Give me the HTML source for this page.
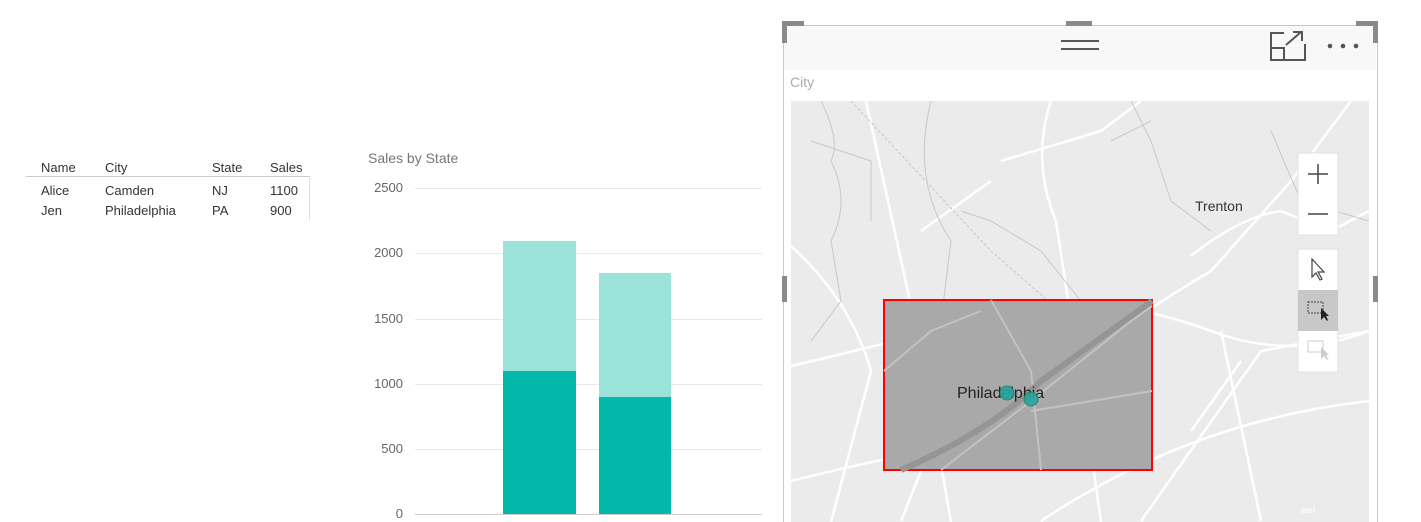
<!DOCTYPE html>
<html><head><meta charset="utf-8"><style>
html,body{margin:0;width:1421px;height:522px;overflow:hidden}
body{background:#fff;font-family:"Liberation Sans",sans-serif}
#w{position:relative;width:1421px;height:522px;overflow:hidden}
svg{display:block}
.t{position:absolute;font-size:13px;line-height:15px;color:#333}
.ax{position:absolute;font-size:13px;line-height:14px;color:#666;text-align:right;width:36px;left:367px}
.g{position:absolute;left:415px;width:347px;height:1px;background:#e8e8e8}
</style></head><body><div id="w">
<div class="t" style="left:41px;top:160px">Name</div>
<div class="t" style="left:105px;top:160px">City</div>
<div class="t" style="left:212px;top:160px">State</div>
<div class="t" style="left:270px;top:160px">Sales</div>
<div style="position:absolute;left:26px;top:176px;width:284px;height:1px;background:#ccc"></div>
<div style="position:absolute;left:309px;top:178px;width:1px;height:42px;background:#ddd"></div>
<div class="t" style="left:41px;top:183px">Alice</div>
<div class="t" style="left:105px;top:183px">Camden</div>
<div class="t" style="left:212px;top:183px">NJ</div>
<div class="t" style="left:270px;top:183px">1100</div>
<div class="t" style="left:41px;top:203px">Jen</div>
<div class="t" style="left:105px;top:203px">Philadelphia</div>
<div class="t" style="left:212px;top:203px">PA</div>
<div class="t" style="left:270px;top:203px">900</div>
<div style="position:absolute;left:368px;top:150px;font-size:14px;color:#777">Sales by State</div>
<div class="ax" style="top:181px">2500</div><div class="g" style="top:188px"></div>
<div class="ax" style="top:246px">2000</div><div class="g" style="top:253px"></div>
<div class="ax" style="top:312px">1500</div><div class="g" style="top:319px"></div>
<div class="ax" style="top:377px">1000</div><div class="g" style="top:384px"></div>
<div class="ax" style="top:442px">500</div><div class="g" style="top:449px"></div>
<div class="ax" style="top:507px">0</div><div class="g" style="top:514px;background:#ccc"></div>
<div style="position:absolute;left:503px;top:241px;width:73px;height:130px;background:#9be2db"></div>
<div style="position:absolute;left:503px;top:371px;width:73px;height:143px;background:#01b8aa"></div>
<div style="position:absolute;left:599px;top:273px;width:72px;height:124px;background:#9be2db"></div>
<div style="position:absolute;left:599px;top:397px;width:72px;height:117px;background:#01b8aa"></div>
<div style="position:absolute;left:783px;top:25px;width:593px;height:496px;border:1px solid #c8c8c8;border-bottom:none"></div>
<div style="position:absolute;left:784px;top:26px;width:592px;height:44px;background:#f8f8f8"></div>
<svg style="position:absolute;left:0;top:0" width="1421" height="522">
<g fill="#8a8a8a">
<rect x="782" y="21" width="22" height="5"/><rect x="782" y="21" width="5" height="22"/>
<rect x="1356" y="21" width="22" height="5"/><rect x="1373" y="21" width="5" height="22"/>
<rect x="1066" y="21" width="26" height="5"/>
<rect x="782" y="276" width="5" height="26"/><rect x="1373" y="276" width="5" height="26"/>
</g>
<g stroke="#555" stroke-width="2"><line x1="1061" y1="41" x2="1099" y2="41"/><line x1="1061" y1="49" x2="1099" y2="49"/></g>
<g stroke="#555" stroke-width="2" fill="none"><path d="M1284 33H1271V60H1305V44"/><path d="M1271 48H1284V60"/><path d="M1286 45L1301 32M1293 32H1302V41"/></g>
<g fill="#555"><circle cx="1330" cy="46" r="2.3"/><circle cx="1343" cy="46" r="2.3"/><circle cx="1356" cy="46" r="2.3"/></g>
</svg>
<div style="position:absolute;left:790px;top:74px;font-size:14px;color:#aaa">City</div>
<svg style="position:absolute;left:791px;top:101px" width="578" height="421" viewBox="0 0 578 421">
<rect width="578" height="421" fill="#ebebeb"/>
<g fill="none" stroke="#fff" stroke-width="2.5">
<path d="M75 0L130 250L160 421"/><path d="M260 0Q240 60 265 120L300 350L310 421"/>
<path d="M0 145Q60 200 80 270L40 421"/><path d="M0 265Q150 230 250 200Q340 200 420 230T578 230"/>
<path d="M210 60L310 30L350 0"/><path d="M180 350Q300 240 420 170L500 80L560 0"/>
<path d="M130 130L200 80"/><path d="M400 155Q450 115 490 110L540 130L578 110"/>
<path d="M430 230L470 420"/><path d="M0 380Q120 350 200 340"/>
<path d="M250 420Q400 320 578 300"/><path d="M350 420L470 250L578 230"/>
<path d="M110 420L150 320L200 300"/><path d="M400 330L450 260"/>
</g>
<g fill="none" stroke="#c8c8c8" stroke-width="1">
<path d="M30 0Q50 40 40 60Q60 100 40 140L50 200L20 240"/><path d="M140 0Q120 80 160 140L150 220"/>
<path d="M20 40L80 60L80 120"/><path d="M170 110L200 120L250 150L290 200"/>
<path d="M340 0L360 40L380 100L420 130"/><path d="M480 30L510 100L578 120"/>
<path d="M60 0L200 150L280 220" stroke-dasharray="3 2"/><path d="M320 40L360 20"/>
</g>
<rect x="93" y="199" width="268" height="170" fill="#a9a9a9" stroke="#f00" stroke-width="2"/>
<g fill="none" stroke="#c2c2c2" stroke-width="2"><path d="M93 270L140 230L190 210"/><path d="M200 199L240 270L250 369"/><path d="M150 369L240 300L340 220L361 205"/><path d="M240 310L361 290"/></g>
<path d="M110 369Q200 330 250 280L361 200" stroke="#959595" stroke-width="6" fill="none"/>
<text x="166" y="297" font-size="16" fill="#222" font-family="Liberation Sans">Philadelphia</text>
<circle cx="216" cy="292" r="7" fill="#26a69a" stroke="#1a7f75" opacity="0.9"/><circle cx="240" cy="298" r="7" fill="#26a69a" stroke="#1a7f75" opacity="0.9"/>
<text x="404" y="110" font-size="14" fill="#333" font-family="Liberation Sans">Trenton</text>
<rect x="507" y="52" width="40" height="82" fill="#fff" stroke="#e0e0e0"/>
<g stroke="#444" stroke-width="1.5"><path d="M517 73H537M527 63V83M517 113H537"/></g>
<rect x="507" y="148" width="40" height="123" fill="#fff" stroke="#e0e0e0"/>
<rect x="507" y="189" width="40" height="41" fill="#c8c8c8"/>
<path d="M521 158L521 176L525 172L529 179L531 178L527 171L533 171Z" fill="#fff" stroke="#444" stroke-width="1.2"/>
<rect x="517" y="201" width="15" height="11" fill="none" stroke="#444" stroke-dasharray="2 1"/>
<path d="M530 207L530 219L533 216L536 220L537 219L535 215L538 215Z" fill="#222"/>
<rect x="517" y="240" width="15" height="11" fill="none" stroke="#ccc"/>
<path d="M530 246L530 258L533 255L536 259L537 258L535 254L538 254Z" fill="#ccc"/>
<text x="510" y="412" font-size="8" fill="#fff" font-weight="bold" font-family="Liberation Sans">esri</text>
</svg>
</div></body></html>
